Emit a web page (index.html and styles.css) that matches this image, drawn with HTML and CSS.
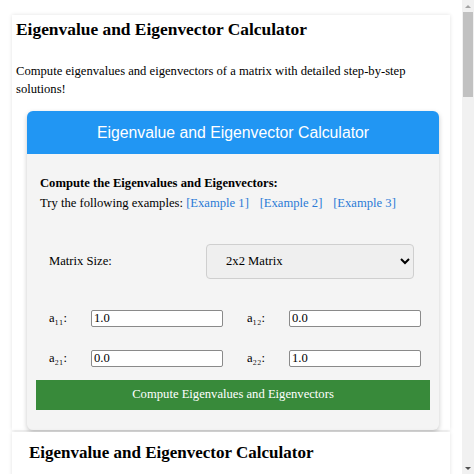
FILE: index.html
```html
<!DOCTYPE html>
<html lang="en">
<head>
<meta charset="utf-8">
<title>Eigenvalue and Eigenvector Calculator</title>
<link rel="stylesheet" href="styles.css">
</head>
<body>
<div class="page">
<div class="wrap">
  <h1 class="title">Eigenvalue and Eigenvector Calculator</h1>
  <p class="lead">Compute eigenvalues and eigenvectors of a matrix with detailed step-by-step solutions!</p>
  <div class="calc">
    <div class="calc-head">Eigenvalue and Eigenvector Calculator</div>
    <div class="calc-body">
      <p class="intro"><b>Compute the Eigenvalues and Eigenvectors:</b><br>Try the following examples: <a href="#" class="ex">[Example 1]</a> <a href="#" class="ex">[Example 2]</a> <a href="#" class="ex">[Example 3]</a></p>
      <div class="size-row">
        <label class="size-label" for="size">Matrix Size:</label>
        <select id="size" class="size-select">
          <option>2x2 Matrix</option>
          <option>3x3 Matrix</option>
        </select>
      </div>
      <div class="matrix">
        <label class="cell-label">a₁₁:</label><input class="cell" type="text" value="1.0">
        <label class="cell-label">a₁₂:</label><input class="cell" type="text" value="0.0">
        <label class="cell-label">a₂₁:</label><input class="cell" type="text" value="0.0">
        <label class="cell-label">a₂₂:</label><input class="cell" type="text" value="1.0">
      </div>
      <button class="compute" type="button">Compute Eigenvalues and Eigenvectors</button>
    </div>
  </div>
</div>
<div class="wrap second">
  <h2 class="sub">Eigenvalue and Eigenvector Calculator</h2>
  <div class="more">
    <p class="text">The eigenvalues of a square matrix A are the roots of its characteristic polynomial det(A − λI) = 0. For each eigenvalue λ, the eigenvectors are the non-zero solutions of (A − λI)v = 0.</p>
    <p class="text">Enter the entries of your matrix above and press the button to see each step of the computation.</p>
  </div>
</div>
</div>
<div class="scrollbar" aria-hidden="true">
  <div class="sb-btn sb-up"></div>
  <div class="sb-track"><div class="sb-thumb"></div></div>
  <div class="sb-btn sb-down"></div>
</div>
</body>
</html>
```

FILE: styles.css
```css
html, body {
  margin: 0;
  padding: 0;
  background: #ffffff;
}
body {
  font-family: "Liberation Serif", "Times New Roman", serif;
  color: #000;
}
.page {
  padding-top: 15px;
  padding-bottom: 20px;
}
.wrap {
  margin-left: 12px;
  width: 423px;
  padding: 0 11px 0 4px;
  background: #fff;
  box-shadow: 0 0 4px rgba(0,0,0,0.12);
  display: flow-root;
}
.title {
  font-size: 17.4px;
  line-height: 23px;
  margin: 3.3px 0 0;
  font-weight: bold;
}
.lead {
  font-size: 12.64px;
  line-height: 17.7px;
  margin: 21.6px 0 0;
}
.calc {
  margin: 12.7px 0 0 11px;
  width: 412px;
  border-radius: 6px;
  background: #f4f4f4;
  box-shadow: 0 2px 5px rgba(0,0,0,0.22);
}
.calc-head {
  background: #2196f3;
  color: #fff;
  font-family: "Liberation Sans", Arial, sans-serif;
  font-size: 15.8px;
  height: 43px;
  line-height: 43px;
  text-align: center;
  border-radius: 6px 6px 0 0;
}
.calc-body {
  padding: 0 9px 20px;
  display: flow-root;
}
.intro {
  font-size: 12.64px;
  line-height: 20px;
  margin: 18.7px 0 0 4px;
}
.ex {
  color: #2a7ad6;
  text-decoration: none;
  margin-right: 7.6px;
}
.size-row {
  display: flex;
  align-items: center;
  margin-top: 31.3px;
  padding: 0 16px 0 13px;
}
.size-label {
  font-size: 12.64px;
  width: 157px;
  flex: none;
}
.size-select {
  width: 208px;
  height: 35px;
  font-family: "Liberation Serif", "Times New Roman", serif;
  font-size: 12.64px;
  padding: 0 6px 0 15px;
  background: #efefef;
  border: 1px solid #cfcfcf;
  border-radius: 4px;
  color: #000;
}
.matrix {
  display: grid;
  grid-template-columns: 42px 132px 66px 132px;
  row-gap: 22.5px;
  margin-top: 31px;
  padding-left: 13px;
  align-items: center;
}
.matrix .cell-label:nth-of-type(2n) {
  margin-left: 24px;
}
.cell-label {
  font-size: 12.64px;
}
.cell {
  box-sizing: border-box;
  width: 132px;
  height: 17.5px;
  font-family: "Liberation Serif", "Times New Roman", serif;
  font-size: 12.64px;
  padding: 0 2px;
  border: 1px solid #8a8a8a;
  border-radius: 2px;
  background: #fff;
  color: #000;
}
.compute {
  display: block;
  width: 100%;
  height: 30px;
  margin-top: 12.5px;
  background: #388a3a;
  color: #fff;
  border: none;
  font-family: "Liberation Serif", "Times New Roman", serif;
  font-size: 12.64px;
  padding: 0;
}
.second {
  margin-top: 2px;
  padding: 0 11px 10px 17px;
  width: 410px;
}
.sub {
  font-size: 17px;
  line-height: 22px;
  margin: 10px 0 0;
}
.more {
  padding-top: 40px;
}
.text {
  font-size: 12.64px;
  line-height: 17.7px;
}
.scrollbar {
  position: fixed;
  top: 0;
  right: 0;
  width: 12px;
  height: 100vh;
  background: #f1f1f1;
  display: flex;
  flex-direction: column;
}
.sb-btn {
  height: 12px;
  flex: none;
  display: flex;
  align-items: center;
  justify-content: center;
}
.sb-up::before,
.sb-down::before {
  content: "";
  width: 0;
  height: 0;
  border-left: 3px solid transparent;
  border-right: 3px solid transparent;
}
.sb-up::before {
  border-bottom: 3px solid #a3a3a3;
}
.sb-down::before {
  border-top: 3px solid #505050;
}
.sb-track {
  flex: 1;
  padding: 0 1px;
}
.sb-thumb {
  height: 85px;
  background: #c1c1c1;
}
```
